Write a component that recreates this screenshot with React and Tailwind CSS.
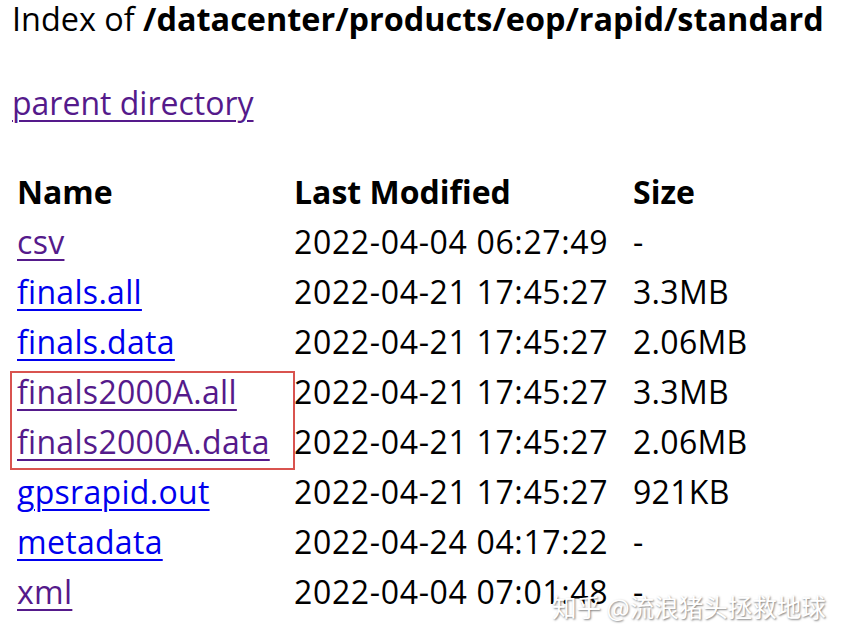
import React from 'react';

const rows = [
    { name: "csv", date: "2022-04-04 06:27:49", size: "-", visited: true },
    { name: "finals.all", date: "2022-04-21 17:45:27", size: "3.3MB" },
    { name: "finals.data", date: "2022-04-21 17:45:27", size: "2.06MB" },
    { name: "finals2000A.all", date: "2022-04-21 17:45:27", size: "3.3MB", visited: true },
    { name: "finals2000A.data", date: "2022-04-21 17:45:27", size: "2.06MB", visited: true },
    { name: "gpsrapid.out", date: "2022-04-21 17:45:27", size: "921KB" },
    { name: "metadata", date: "2022-04-24 04:17:22", size: "-" },
    { name: "xml", date: "2022-04-04 07:01:48", size: "-", visited: true },
];

const App = () => {
    return (
        <div className="relative w-[848px] h-[644px] overflow-hidden bg-white text-black px-[12px] font-['Open_Sans','Noto_Sans',sans-serif] text-[32px]">
            <h1 className="leading-[36px] whitespace-nowrap text-[32.4px]">
                Index of <b className="font-bold">/datacenter/products/eop/rapid/standard</b>
            </h1>

            <div className="mt-[49px] leading-[36px]">
                <a href="#" className="text-[#551a8b] underline underline-offset-[5px] decoration-2">parent directory</a>
            </div>

            <div className="mt-[46px] pl-[5px]">
                <div className="grid grid-cols-[277px_339px_1fr] h-[50px] items-center font-bold">
                    <span>Name</span>
                    <span>Last Modified</span>
                    <span>Size</span>
                </div>
                {rows.map((row, i) => (
                    <div key={i} className="grid grid-cols-[277px_339px_1fr] h-[50px] items-center whitespace-nowrap">
                        <span className="tracking-[0.3px]">
                            <a href="#"
                                className={(row.visited ? "text-[#551a8b]" : "text-[#0000ee]") + " underline underline-offset-[5px] decoration-2"}>
                                {row.name}
                            </a>
                        </span>
                        <span className="tracking-[0.65px]">{row.date}</span>
                        <span className="tracking-[0.3px]">{row.size}</span>
                    </div>
                ))}
            </div>

            {/* highlight annotation */}
            <div className="absolute left-[10px] top-[371px] w-[285px] h-[99px] border-2 border-[#d9534f]" />

            {/* watermark */}
            <div className="absolute left-[552px] top-[590px] text-[24.5px] leading-[34px] text-white whitespace-nowrap font-['Noto_Sans_CJK_SC',sans-serif] [text-shadow:1px_1px_2px_rgba(0,0,0,0.5)]">
                知乎 @流浪猪头拯救地球
            </div>
        </div>
    );
};

export default App;
